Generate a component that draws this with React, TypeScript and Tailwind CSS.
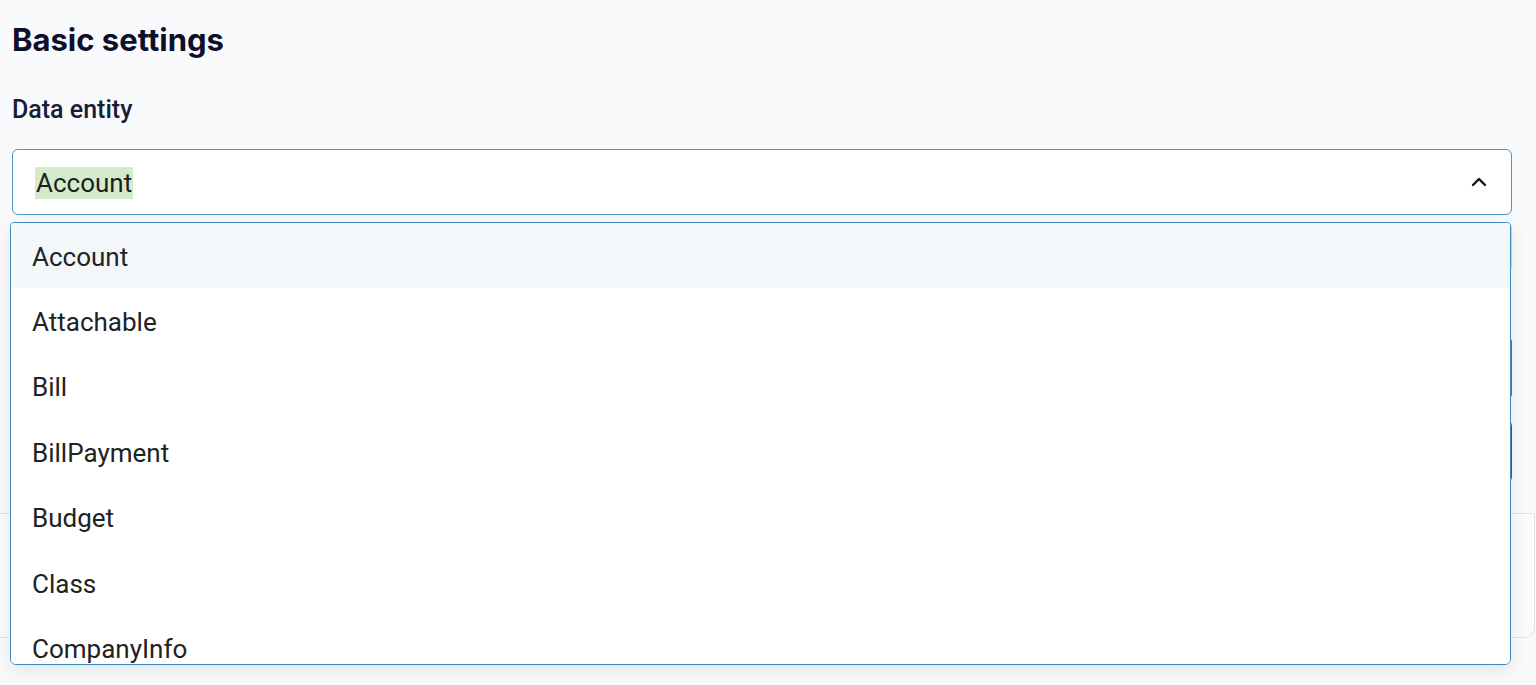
import React from "react";

const items = ["Account", "Attachable", "Bill", "BillPayment", "Budget", "Class", "CompanyInfo"];

export default function App() {
  return (
    <div className="relative h-[685px] w-full overflow-hidden bg-[#f9fafb]" style={{ fontFamily: "Roboto, 'Liberation Sans', sans-serif" }}>
      <div className="px-3">
        <h1 className="pt-[22px] text-[31px] font-bold leading-[36px] text-[#0d0f2b]" style={{ fontFamily: "Inter, 'Liberation Sans', sans-serif" }}>
          Basic settings
        </h1>
        <div className="mt-[36px] text-[25px] font-medium leading-[32px] text-[#1a1c36]">Data entity</div>
        <div className="mt-[23px] flex h-[66px] w-[1500px] items-center justify-between rounded-[6px] border border-[#4d93c4] bg-white pl-[22px] pr-[24px]">
          <span className="mt-[2px] bg-[#d3ebcb] px-[1px] text-[26px] leading-[32px] text-[#1e1e1e]">Account</span>
          <svg width="16" height="10" viewBox="0 0 16 10" fill="none" stroke="#111" strokeWidth="2.4" strokeLinecap="round" strokeLinejoin="round">
            <path d="M2 8 L8 2 L14 8" />
          </svg>
        </div>
        <div className="mt-[7px] h-[50px] w-[1500px] rounded-[6px] border border-[#c9d6e0] bg-white" />
        <div className="mt-[64px] h-[64px] w-[1500px] rounded-[6px] border border-[#2f7fb5] bg-white" />
        <div className="mt-[20px] h-[63px] w-[1500px] rounded-[6px] border-2 border-[#14689e] bg-white" />
      </div>
      <div className="mt-[30px] h-[125px] w-[1535px] rounded-br-[10px] border-t border-r border-b border-[#dfe3e8] bg-[#fbfbfc]" />

      <div className="absolute left-[10px] top-[222px] h-[443px] w-[1501px] overflow-hidden rounded-b-[6px] rounded-t-[4px] border border-[#3d8bbd] bg-white shadow-[0_6px_18px_rgba(30,60,90,0.10)]">
        {items.map((it, i) => (
          <div
            key={it}
            className={`flex h-[65.4px] items-center pl-[21px] pt-[3px] text-[26px] text-[#222222] ${i === 0 ? "bg-[#f4f7f9]" : "bg-white"}`}
          >
            {it}
          </div>
        ))}
      </div>
    </div>
  );
}
